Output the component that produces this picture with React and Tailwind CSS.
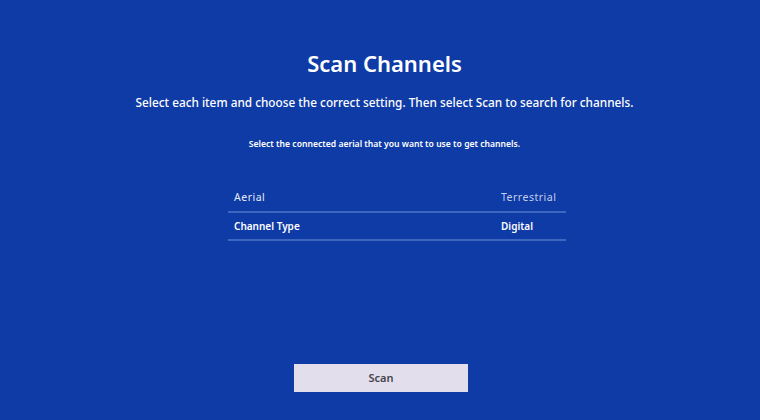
import React from 'react';

const rows = [
  { label: 'Aerial', value: 'Terrestrial', bold: false },
  { label: 'Channel Type', value: 'Digital', bold: true },
];

const App = () => {
  return (
    <div
      className="w-[760px] h-[420px] bg-[#0e3ba6] text-white flex flex-col items-center overflow-hidden pl-[9px]"
      style={{ fontFamily: '"Noto Sans", "Open Sans", sans-serif' }}
    >
      <h1 className="mt-[47px] text-[22px] leading-[32px] font-semibold">Scan Channels</h1>
      <p className="mt-[14px] text-[11.8px] leading-[18px] font-medium">
        Select each item and choose the correct setting. Then select Scan to search for channels.
      </p>
      <p className="mt-[27px] text-[8.6px] leading-[12px] font-semibold">
        Select the connected aerial that you want to use to get channels.
      </p>

      <div className="mt-[35px] ml-[25px] w-[338px] flex flex-col">
        {rows.map((row) => (
          <div
            key={row.label}
            className="h-[28px] flex items-center border-b-2 border-[#3d66c0] px-[6px]"
          >
            <span
              className={`flex-1 ${row.bold ? 'text-[10px] font-semibold text-white' : 'text-[10.5px] tracking-[0.5px] text-[#e4ebf7]'}`}
            >
              {row.label}
            </span>
            <span
              className={`w-[59px] ${row.bold ? 'text-[10px] font-semibold text-white' : 'text-[10.5px] tracking-[0.5px] text-[#c3cfe9]'}`}
            >
              {row.value}
            </span>
          </div>
        ))}
      </div>

      <button className="mt-[123px] mr-[7px] w-[174px] h-[28px] bg-[#e3deec] text-[#44444e] text-[11px] font-semibold flex items-center justify-center">
        Scan
      </button>
    </div>
  );
};

export default App;
